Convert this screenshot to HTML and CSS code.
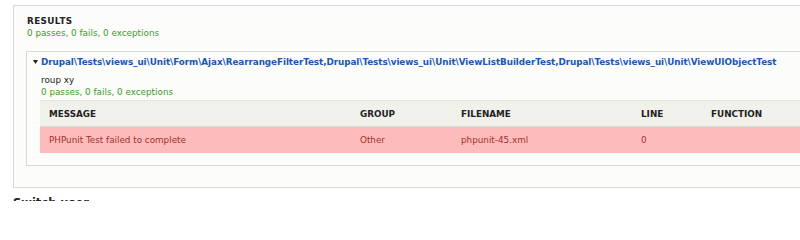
FILE: index.html
```html
<!DOCTYPE html>
<html>
<head>
<meta charset="utf-8">
<link rel="stylesheet" href="styles.css">
</head>
<body>
<div class="page">
  <div class="results">
    <div class="results-title">Results</div>
    <div class="summary-text">0 passes, 0 fails, 0 exceptions</div>
    <div class="group">
      <div class="group-head">
        <svg class="arrow" width="5" height="4" viewBox="0 0 5 4"><polygon points="0,0 5,0 2.5,4" fill="#222"/></svg>
        <a class="group-link" href="#">Drupal\Tests\views_ui\Unit\Form\Ajax\RearrangeFilterTest,Drupal\Tests\views_ui\Unit\ViewListBuilderTest,Drupal\Tests\views_ui\Unit\ViewUIObjectTest</a>
      </div>
      <div class="group-body">
        <div class="group-name">roup xy</div>
        <div class="summary-text">0 passes, 0 fails, 0 exceptions</div>
        <table class="result-table">
          <colgroup>
            <col class="c-msg"><col class="c-group"><col class="c-file"><col class="c-line"><col class="c-func">
          </colgroup>
          <thead>
            <tr><th>Message</th><th>Group</th><th>Filename</th><th>Line</th><th>Function</th></tr>
          </thead>
          <tbody>
            <tr class="row-fail"><td>PHPunit Test failed to complete</td><td>Other</td><td>phpunit-45.xml</td><td>0</td><td></td></tr>
          </tbody>
        </table>
      </div>
    </div>
  </div>
  <h2 class="block-title">Switch user</h2>
</div>
</body>
</html>
```
FILE: styles.css
```css
html, body {
  margin: 0;
  padding: 0;
  background: #ffffff;
}
body {
  font-family: "DejaVu Sans", sans-serif;
  font-size: 8.8px;
  line-height: 12px;
  color: #222222;
}
.page {
  width: 800px;
  height: 201px;
  overflow: hidden;
}
.results {
  margin: 5px 0 0 13px;
  width: 840px;
  border: 1px solid #d9d9d5;
  background: #fcfcfa;
  padding: 9px 12px 21px 12px;
}
.results-title {
  font-weight: bold;
  text-transform: uppercase;
  letter-spacing: 0.4px;
  padding-left: 1px;
}
.summary-text {
  color: #3c9a2a;
  padding-left: 1px;
}
.group {
  margin-top: 12px;
  border: 1px solid #d9d9d5;
  background: #fcfcfa;
  padding: 4px 0 12px 0;
}
.group-head {
  display: flex;
  align-items: center;
  gap: 3px;
  padding-left: 6px;
  height: 12px;
}
.arrow {
  display: block;
  flex: none;
}
.group-link {
  color: #1a57b5;
  font-weight: bold;
  text-decoration: none;
  white-space: nowrap;
  letter-spacing: -0.06px;
}
.group-body {
  margin-top: 6px;
  padding-left: 13px;
}
.group-name {
  padding-left: 1px;
}
.result-table {
  margin-top: 2px;
  border-collapse: collapse;
  table-layout: fixed;
  width: 820px;
}
.c-msg { width: 311px; }
.c-group { width: 101px; }
.c-file { width: 180px; }
.c-line { width: 70px; }
.c-func { width: 158px; }
.result-table th {
  text-align: left;
  text-transform: uppercase;
  font-weight: bold;
  background: #f1f1ec;
  border-top: 1px solid #e4e4e0;
  border-bottom: 1px solid #deded9;
  height: 25px;
  padding: 0 0 0 9px;
  color: #222;
}
.result-table td {
  height: 26px;
  padding: 0 0 0 9px;
}
.row-fail td {
  background: #fdbcbc;
  color: #a0312a;
}
.block-title {
  margin: 8px 0 0 13px;
  font-size: 11.5px;
  line-height: 14px;
  font-weight: bold;
  color: #222;
}
```
